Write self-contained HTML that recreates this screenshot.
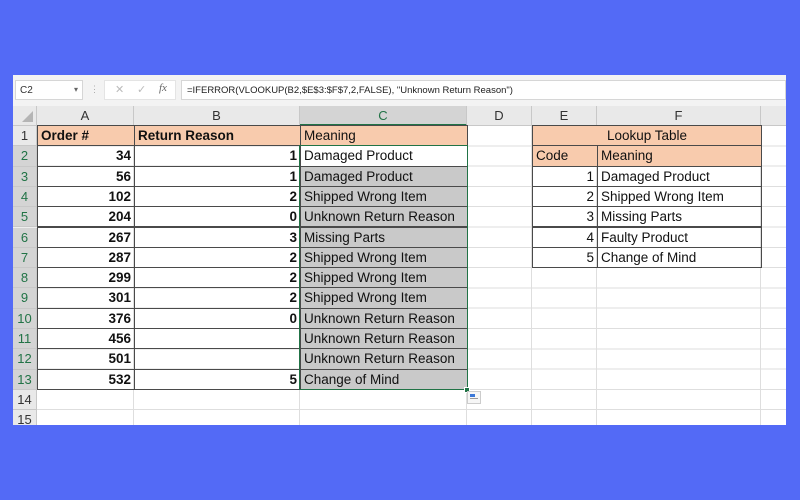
<!DOCTYPE html>
<html><head><meta charset="utf-8"><style>
*{margin:0;padding:0;box-sizing:border-box}
body{width:800px;height:500px;background:#536af6;position:relative;overflow:hidden;font-family:"Liberation Sans",sans-serif}
#win{position:absolute;left:13px;top:75px;width:773px;height:350px;background:#fff;overflow:hidden}
#fbar{position:absolute;left:0;top:0;width:773px;height:31px;background:#f3f3f3}
.nb{position:absolute;left:2px;top:5px;width:68px;height:20px;background:#fff;border:1px solid #d6d6d6;font-size:10px;color:#333;padding:4px 0 0 4px}
.nb:after{content:"▾";position:absolute;right:4px;top:4px;font-size:8px;color:#666}
.ic{position:absolute;top:5px;left:91px;width:72px;height:20px;background:#fff;border:1px solid #e4e4e4}
.ft{position:absolute;left:168px;top:5px;width:605px;height:20px;background:#fff;border:1px solid #d6d6d6;font-size:9.5px;color:#222;padding:4px 0 0 5px;white-space:nowrap}
.c{position:absolute;height:21.3px;font-size:13.5px;color:#111;padding:0 3px;white-space:nowrap;overflow:hidden;line-height:20px}
.h{position:absolute;top:31px;height:20px;background:#e9e9e9;text-align:center;color:#333;font-size:13px;line-height:20px;border-right:1px solid #c8c8c8;border-bottom:1px solid #c8c8c8}
.rn{position:absolute;left:0;width:24px;height:20.3px;background:#e9e9e9;text-align:center;color:#333;font-size:13px;line-height:20px;border-bottom:1px solid #c8c8c8;border-right:1px solid #c8c8c8}
.rs{background:#d4d4d4;color:#217346}
.pk{background:#f8cbad}
.d{border:1px solid #4a4a4a}
.b{font-weight:bold}
.n{text-align:right}
.g{background:#c9c9c9}
.vl{position:absolute;top:51px;width:1px;height:300px;background:#dedede}
</style></head><body>
<div id="win">
<div id="fbar">
<div class="nb">C2</div>
<div style="position:absolute;left:77px;top:9px;font-size:9px;color:#aaa">⋮</div>
<div class="ic"><span style="position:absolute;left:10px;top:2px;font-size:11px;color:#bbb">✕</span><span style="position:absolute;left:32px;top:2px;font-size:11px;color:#bbb">✓</span><span style="position:absolute;left:54px;top:1px;font-size:11px;color:#666;font-style:italic;font-family:'Liberation Serif',serif">fx</span></div>
<div class="ft">=IFERROR(VLOOKUP(B2,$E$3:$F$7,2,FALSE), "Unknown Return Reason")</div>
</div>
<div style="position:absolute;left:0;top:51px;width:773px;height:300px;background:repeating-linear-gradient(to bottom,transparent 0,transparent 19.3px,#dedede 19.3px,#dedede 20.3px)"></div>
<div class="vl" style="left:120px"></div><div class="vl" style="left:286px"></div><div class="vl" style="left:453px"></div><div class="vl" style="left:518px"></div><div class="vl" style="left:583px"></div><div class="vl" style="left:747px"></div>
<div class="h" style="left:0;width:24px"><div style="position:absolute;right:3px;bottom:3px;width:0;height:0;border-left:11px solid transparent;border-bottom:11px solid #b5b5b5"></div></div>
<div class="h" style="left:24px;width:97px">A</div>
<div class="h" style="left:121px;width:166px">B</div>
<div class="h rs" style="left:287px;width:167px;border-bottom:2px solid #217346">C</div>
<div class="h" style="left:454px;width:65px">D</div>
<div class="h" style="left:519px;width:65px">E</div>
<div class="h" style="left:584px;width:164px">F</div>
<div class="h" style="left:748px;width:30px"></div>

<div class="rn" style="top:51px">1</div>
<div class="rn rs" style="top:71.3px">2</div>
<div class="rn rs" style="top:91.6px">3</div>
<div class="rn rs" style="top:111.9px">4</div>
<div class="rn rs" style="top:132.2px">5</div>
<div class="rn rs" style="top:152.5px">6</div>
<div class="rn rs" style="top:172.8px">7</div>
<div class="rn rs" style="top:193.1px">8</div>
<div class="rn rs" style="top:213.4px">9</div>
<div class="rn rs" style="top:233.7px">10</div>
<div class="rn rs" style="top:254px">11</div>
<div class="rn rs" style="top:274.3px">12</div>
<div class="rn rs" style="top:294.6px">13</div>
<div class="rn" style="top:314.9px">14</div>
<div class="rn" style="top:335.2px">15</div>

<!-- row 1 -->
<div class="c pk b d" style="top:50px;left:24px;width:98px">Order #</div>
<div class="c pk b d" style="top:50px;left:121px;width:167px">Return Reason</div>
<div class="c pk d" style="top:50px;left:287px;width:168px">Meaning</div>
<div class="c pk d" style="top:50px;left:519px;width:230px;text-align:center">Lookup Table</div>
<!-- col A/B -->
<div class="c b n d" style="top:70.3px;left:24px;width:98px">34</div><div class="c b n d" style="top:70.3px;left:121px;width:167px">1</div>
<div class="c b n d" style="top:90.6px;left:24px;width:98px">56</div><div class="c b n d" style="top:90.6px;left:121px;width:167px">1</div>
<div class="c b n d" style="top:110.9px;left:24px;width:98px">102</div><div class="c b n d" style="top:110.9px;left:121px;width:167px">2</div>
<div class="c b n d" style="top:131.2px;left:24px;width:98px">204</div><div class="c b n d" style="top:131.2px;left:121px;width:167px">0</div>
<div class="c b n d" style="top:151.5px;left:24px;width:98px">267</div><div class="c b n d" style="top:151.5px;left:121px;width:167px">3</div>
<div class="c b n d" style="top:171.8px;left:24px;width:98px">287</div><div class="c b n d" style="top:171.8px;left:121px;width:167px">2</div>
<div class="c b n d" style="top:192.1px;left:24px;width:98px">299</div><div class="c b n d" style="top:192.1px;left:121px;width:167px">2</div>
<div class="c b n d" style="top:212.4px;left:24px;width:98px">301</div><div class="c b n d" style="top:212.4px;left:121px;width:167px">2</div>
<div class="c b n d" style="top:232.7px;left:24px;width:98px">376</div><div class="c b n d" style="top:232.7px;left:121px;width:167px">0</div>
<div class="c b n d" style="top:253px;left:24px;width:98px">456</div><div class="c b n d" style="top:253px;left:121px;width:167px"></div>
<div class="c b n d" style="top:273.3px;left:24px;width:98px">501</div><div class="c b n d" style="top:273.3px;left:121px;width:167px"></div>
<div class="c b n d" style="top:293.6px;left:24px;width:98px">532</div><div class="c b n d" style="top:293.6px;left:121px;width:167px">5</div>
<!-- col C -->
<div class="c d" style="top:70.3px;left:287px;width:168px;background:#fff">Damaged Product</div>
<div class="c g d" style="top:90.6px;left:287px;width:168px">Damaged Product</div>
<div class="c g d" style="top:110.9px;left:287px;width:168px">Shipped Wrong Item</div>
<div class="c g d" style="top:131.2px;left:287px;width:168px">Unknown Return Reason</div>
<div class="c g d" style="top:151.5px;left:287px;width:168px">Missing Parts</div>
<div class="c g d" style="top:171.8px;left:287px;width:168px">Shipped Wrong Item</div>
<div class="c g d" style="top:192.1px;left:287px;width:168px">Shipped Wrong Item</div>
<div class="c g d" style="top:212.4px;left:287px;width:168px">Shipped Wrong Item</div>
<div class="c g d" style="top:232.7px;left:287px;width:168px">Unknown Return Reason</div>
<div class="c g d" style="top:253px;left:287px;width:168px">Unknown Return Reason</div>
<div class="c g d" style="top:273.3px;left:287px;width:168px">Unknown Return Reason</div>
<div class="c g d" style="top:293.6px;left:287px;width:168px">Change of Mind</div>
<!-- lookup -->
<div class="c pk d" style="top:70.3px;left:519px;width:66px">Code</div><div class="c pk d" style="top:70.3px;left:584px;width:165px">Meaning</div>
<div class="c n d" style="top:90.6px;left:519px;width:66px">1</div><div class="c d" style="top:90.6px;left:584px;width:165px">Damaged Product</div>
<div class="c n d" style="top:110.9px;left:519px;width:66px">2</div><div class="c d" style="top:110.9px;left:584px;width:165px">Shipped Wrong Item</div>
<div class="c n d" style="top:131.2px;left:519px;width:66px">3</div><div class="c d" style="top:131.2px;left:584px;width:165px">Missing Parts</div>
<div class="c n d" style="top:151.5px;left:519px;width:66px">4</div><div class="c d" style="top:151.5px;left:584px;width:165px">Faulty Product</div>
<div class="c n d" style="top:171.8px;left:519px;width:66px">5</div><div class="c d" style="top:171.8px;left:584px;width:165px">Change of Mind</div>

<div style="position:absolute;left:286px;top:70px;width:169px;height:245px;border:1.5px solid #217346"></div>
<div style="position:absolute;left:451px;top:312px;width:6px;height:6px;background:#217346;border:1px solid #fff"></div>
<div style="position:absolute;left:454px;top:316px;width:14px;height:13px;border:1px solid #ccc;background:#f6f6f6"><div style="position:absolute;left:2px;top:2px;width:5px;height:3px;background:#3b78d8"></div><div style="position:absolute;left:2px;top:6px;width:8px;height:1px;background:#999"></div></div>
</div>
</body></html>
